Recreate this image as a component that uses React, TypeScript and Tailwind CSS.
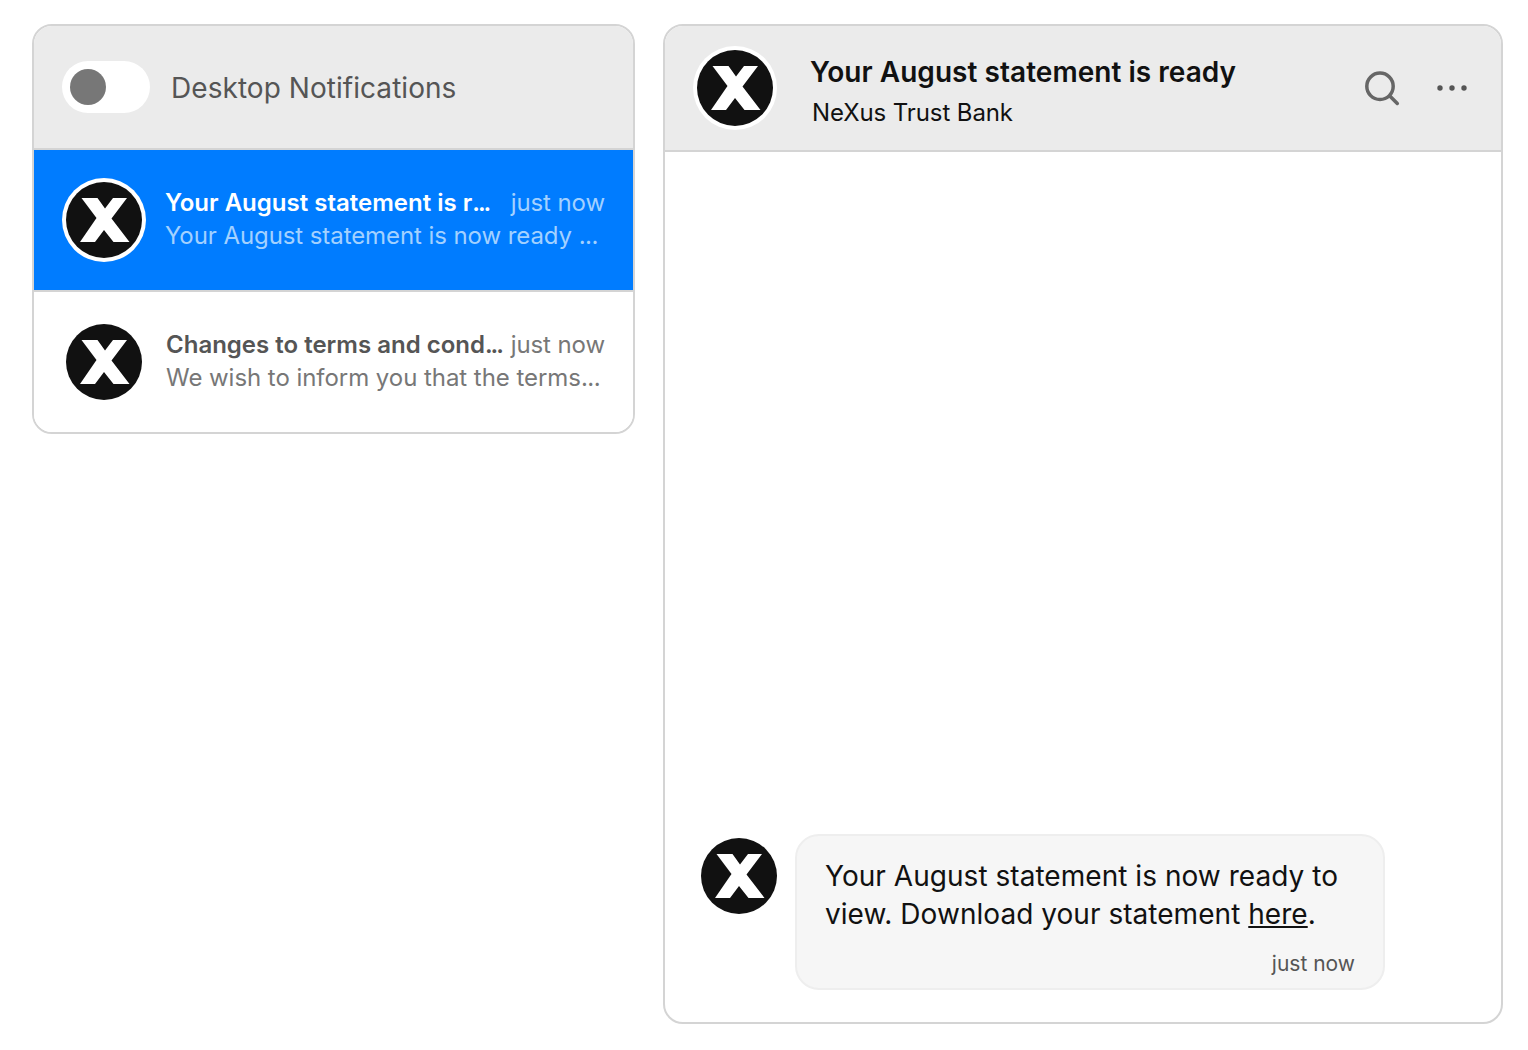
import { type ReactNode } from 'react'

function Logo({ ring = false }: { ring?: boolean }) {
  return (
    <div
      className={
        ring
          ? 'flex h-[84px] w-[84px] shrink-0 items-center justify-center rounded-full bg-white'
          : 'flex h-[76px] w-[76px] shrink-0 items-center justify-center rounded-full'
      }
    >
      <svg viewBox="0 0 76 76" className="h-[76px] w-[76px]">
        <circle cx="38" cy="38" r="38" fill="#111111" />
        <polygon
          fill="#ffffff"
          points="15.5,16 31.5,16 39,26.5 47,16 61,16 45.5,36.5 63.5,60 47.5,60 38,48 29,60 14,60 30.5,36"
        />
      </svg>
    </div>
  )
}

interface RowProps {
  title: string
  preview: string
  active?: boolean
}

function Row({ title, preview, active }: RowProps) {
  return (
    <div
      className={
        active
          ? 'flex h-[140px] items-center bg-[#007cff] pl-7 pr-7'
          : 'flex h-[140px] items-center bg-white pl-8 pr-7'
      }
    >
      <Logo ring={active} />
      <div className={active ? 'mb-0.5 ml-[19px] min-w-0 flex-1' : 'mb-0.5 ml-[24px] min-w-0 flex-1'}>
        <div className="flex h-[33px] items-center justify-between">
          <span
            className={
              active
                ? 'whitespace-nowrap text-[24px] font-semibold text-white'
                : 'whitespace-nowrap text-[24px] font-semibold text-[#555555]'
            }
          >
            {title}
            {/* the reference's ellipsis is tighter than Inter's own glyph */}
            <span className="tracking-[-2px]">...</span>
          </span>
          <span
            className={
              active
                ? 'shrink-0 text-[24px] tracking-[-0.1px] text-[#a3d1ff]'
                : 'shrink-0 text-[24px] tracking-[-0.1px] text-[#777777]'
            }
          >
            just now
          </span>
        </div>
        <div
          className={
            active
              ? 'h-[33px] whitespace-nowrap text-[24px] leading-[33px] tracking-[-0.08px] text-[#a3d1ff]'
              : 'h-[33px] whitespace-nowrap text-[24px] leading-[33px] tracking-[-0.05px] text-[#777777]'
          }
        >
          {preview}
          <span className="tracking-[-0.5px]">...</span>
        </div>
      </div>
    </div>
  )
}

function Panel({ className, children }: { className: string; children: ReactNode }) {
  return (
    <div className={`overflow-hidden rounded-[20px] border-2 border-[#d4d4d4] bg-white ${className}`}>
      {children}
    </div>
  )
}

export default function App() {
  return (
    <div
      className="flex min-h-[1050px] items-start gap-[28px] bg-white pl-8 pt-6"
      style={{ fontFamily: 'Inter, "Noto Sans", sans-serif' }}
    >
      <Panel className="w-[603px]">
        <div className="flex h-[124px] items-center border-b-2 border-[#d4d4d4] bg-[#ebebeb] pl-7">
          <div className="flex h-[52px] w-[88px] items-center rounded-full bg-white pl-2">
            <div className="h-9 w-9 rounded-full bg-[#777777]" />
          </div>
          <span className="ml-[21px] pt-0.5 text-[28px] tracking-[0.05px] text-[#555555]">
            Desktop Notifications
          </span>
        </div>
        <Row active title="Your August statement is r" preview="Your August statement is now ready " />
        <div className="h-0.5 bg-[#d4d4d4]" />
        <Row title="Changes to terms and cond" preview="We wish to inform you that the terms" />
      </Panel>

      <Panel className="flex h-[1000px] w-[840px] flex-col">
        <div className="flex h-[126px] shrink-0 items-center border-b-2 border-[#d4d4d4] bg-[#ebebeb] pl-7 pr-[33px]">
          <Logo ring />
          <div className="ml-[33px] flex-1 pt-[11px]">
            <div className="text-[28px] leading-[38px] font-semibold tracking-[0.04px] text-[#111111]">
              Your August statement is ready
            </div>
            <div className="ml-0.5 text-[24px] leading-[44px] tracking-[-0.1px] text-[#111111]">
              NeXus Trust Bank
            </div>
          </div>
          <svg viewBox="0 0 36 36" className="h-9 w-9" fill="none" stroke="#666666" strokeWidth="3.5">
            <circle cx="15" cy="16.3" r="13.2" />
            <path d="M24.8 26 L32.3 33.5" strokeLinecap="round" />
          </svg>
          <svg viewBox="0 0 32 8" className="ml-[35px] h-2 w-8" fill="#555555">
            <circle cx="4" cy="4" r="2.7" />
            <circle cx="16" cy="4" r="2.7" />
            <circle cx="28" cy="4" r="2.7" />
          </svg>
        </div>
        <div className="flex flex-1 items-end pb-8 pl-9">
          <div className="flex items-start gap-[18px]">
            <div className="pt-[4px]">
              <Logo />
            </div>
            <div className="h-[156px] w-[590px] rounded-[24px] border-2 border-[#eeeeee] bg-[#f6f6f6] pl-[28px] pr-7 pt-[21px]">
              <p className="text-[28px] leading-[38px] tracking-[0.04px] text-[#111111]">
                Your August statement is now ready to view. Download your statement{' '}
                <span className="underline">here</span>.
              </p>
              <div className="mt-[18px] text-right text-[21px] leading-[26px] text-[#555555]">
                just now
              </div>
            </div>
          </div>
        </div>
      </Panel>
    </div>
  )
}
